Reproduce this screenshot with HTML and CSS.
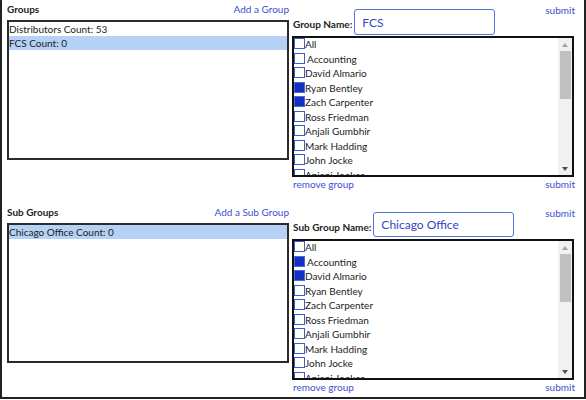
FILE: index.html
```html
<!DOCTYPE html>
<html>
<head>
<meta charset="utf-8">
<link rel="stylesheet" href="styles.css">
</head>
<body>
<div class="page">
  <div class="section">
    <div class="left">
      <div class="head"><span class="title">Groups</span><a class="link">Add a Group</a></div>
      <div class="list">
        <div class="opt">Distributors Count: 53</div>
        <div class="opt sel">FCS Count: 0</div>
      </div>
    </div>
    <div class="right">
      <div class="top">
        <span class="label">Group Name:</span>
        <input class="name" type="text" value="FCS">
        <a class="link submit">submit</a>
      </div>
      <div class="clist">
        <div class="items">
          <div class="row"><span class="cb"></span>All</div>
          <div class="row"><span class="cb"></span><span class="sp">Accounting</span></div>
          <div class="row"><span class="cb"></span>David Almario</div>
          <div class="row"><span class="cb on"></span>Ryan Bentley</div>
          <div class="row"><span class="cb on"></span>Zach Carpenter</div>
          <div class="row"><span class="cb"></span>Ross Friedman</div>
          <div class="row"><span class="cb"></span>Anjali Gumbhir</div>
          <div class="row"><span class="cb"></span>Mark Hadding</div>
          <div class="row"><span class="cb"></span>John Jocke</div>
          <div class="row"><span class="cb"></span>Anjani Jooker</div>
        </div>
        <div class="sb">
          <div class="btn"><span class="up"></span></div>
          <div class="thumb"></div>
          <div class="fill"></div>
          <div class="btn"><span class="down"></span></div>
        </div>
      </div>
      <div class="foot"><a class="link">remove group</a><a class="link">submit</a></div>
    </div>
  </div>
  <div class="section second">
    <div class="left">
      <div class="head"><span class="title">Sub Groups</span><a class="link">Add a Sub Group</a></div>
      <div class="list">
        <div class="opt sel">Chicago Office Count: 0</div>
      </div>
    </div>
    <div class="right">
      <div class="top">
        <span class="label">Sub Group Name:</span>
        <input class="name" type="text" value="Chicago Office">
        <a class="link submit">submit</a>
      </div>
      <div class="clist">
        <div class="items">
          <div class="row"><span class="cb"></span>All</div>
          <div class="row"><span class="cb on"></span><span class="sp">Accounting</span></div>
          <div class="row"><span class="cb on"></span>David Almario</div>
          <div class="row"><span class="cb"></span>Ryan Bentley</div>
          <div class="row"><span class="cb"></span>Zach Carpenter</div>
          <div class="row"><span class="cb"></span>Ross Friedman</div>
          <div class="row"><span class="cb"></span>Anjali Gumbhir</div>
          <div class="row"><span class="cb"></span>Mark Hadding</div>
          <div class="row"><span class="cb"></span>John Jocke</div>
          <div class="row"><span class="cb"></span>Anjani Jooker</div>
        </div>
        <div class="sb">
          <div class="btn"><span class="up"></span></div>
          <div class="thumb"></div>
          <div class="fill"></div>
          <div class="btn"><span class="down"></span></div>
        </div>
      </div>
      <div class="foot"><a class="link">remove group</a><a class="link">submit</a></div>
    </div>
  </div>
</div>
</body>
</html>
```
FILE: styles.css
```css
html, body {
  margin: 0;
  padding: 0;
  background: #fff;
}
.page {
  box-sizing: border-box;
  width: 586px;
  height: 399px;
  border: 2px solid #222;
  border-top: none;
  padding: 0 8px 0 5px;
  font-family: Lato, "Open Sans", sans-serif;
  font-size: 10px;
  color: #222;
  display: flex;
  flex-direction: column;
}
.section {
  display: flex;
  gap: 3px;
  height: 203px;
  flex: none;
}
.section.second {
  height: auto;
  flex: 1;
}
.left {
  width: 282px;
  display: flex;
  flex-direction: column;
}
.head {
  box-sizing: border-box;
  height: 20px;
  padding-top: 3px;
  line-height: 12px;
  display: flex;
  justify-content: space-between;
}
.title {
  font-weight: bold;
}
.link {
  color: #3b4fcf;
  text-decoration: none;
}
.list {
  box-sizing: border-box;
  height: 140px;
  border: 2px solid #2b2b2b;
}
.opt {
  line-height: 14px;
  height: 14px;
  white-space: nowrap;
}
.opt.sel {
  background: #b5d1f6;
}
.right {
  width: 283px;
  display: flex;
  flex-direction: column;
}
.top {
  height: 36px;
  display: flex;
  align-items: flex-start;
  line-height: 12px;
}
.label {
  font-weight: bold;
  margin-top: 18px;
  margin-left: 1px;
}
.name {
  box-sizing: border-box;
  margin: 9px 0 0 2px;
  width: 141px;
  height: 26px;
  border: 1px solid #5474dc;
  border-radius: 3px;
  padding: 0 7px;
  font-family: Lato, "Open Sans", sans-serif;
  font-size: 12px;
  color: #3345c8;
  outline: none;
  background: #fff;
}
.second .name {
  height: 25px;
}
.submit {
  margin-left: auto;
  margin-top: 4px;
}
.clist {
  box-sizing: border-box;
  width: 282px;
  height: 141px;
  border: 2px solid #111;
  display: flex;
}
.items {
  flex: 1;
  overflow: hidden;
}
.row {
  height: 14.56px;
  line-height: 12px;
  display: flex;
  align-items: flex-start;
  white-space: nowrap;
}
.cb {
  box-sizing: border-box;
  width: 11px;
  height: 11px;
  border: 1px solid #3d5cd6;
  background: #fff;
  flex: none;
}
.cb.on {
  background: #1231c2;
  border-color: #4a68d8;
}
.sp {
  padding-left: 2px;
}
.sb {
  width: 14px;
  background: #f1f1f1;
  display: flex;
  flex-direction: column;
}
.btn {
  height: 13px;
  display: flex;
  align-items: center;
  justify-content: center;
}
.up {
  width: 0;
  height: 0;
  border-left: 3px solid transparent;
  border-right: 3px solid transparent;
  border-bottom: 4px solid #a3a3a3;
}
.down {
  width: 0;
  height: 0;
  border-left: 3px solid transparent;
  border-right: 3px solid transparent;
  border-top: 4px solid #505050;
}
.thumb {
  height: 48px;
  margin: 0 1px 0 2px;
  background: #c1c1c1;
}
.fill {
  flex: 1;
}
.foot {
  display: flex;
  justify-content: space-between;
  line-height: 12px;
  padding-top: 1px;
  padding-left: 1px;
}
```
